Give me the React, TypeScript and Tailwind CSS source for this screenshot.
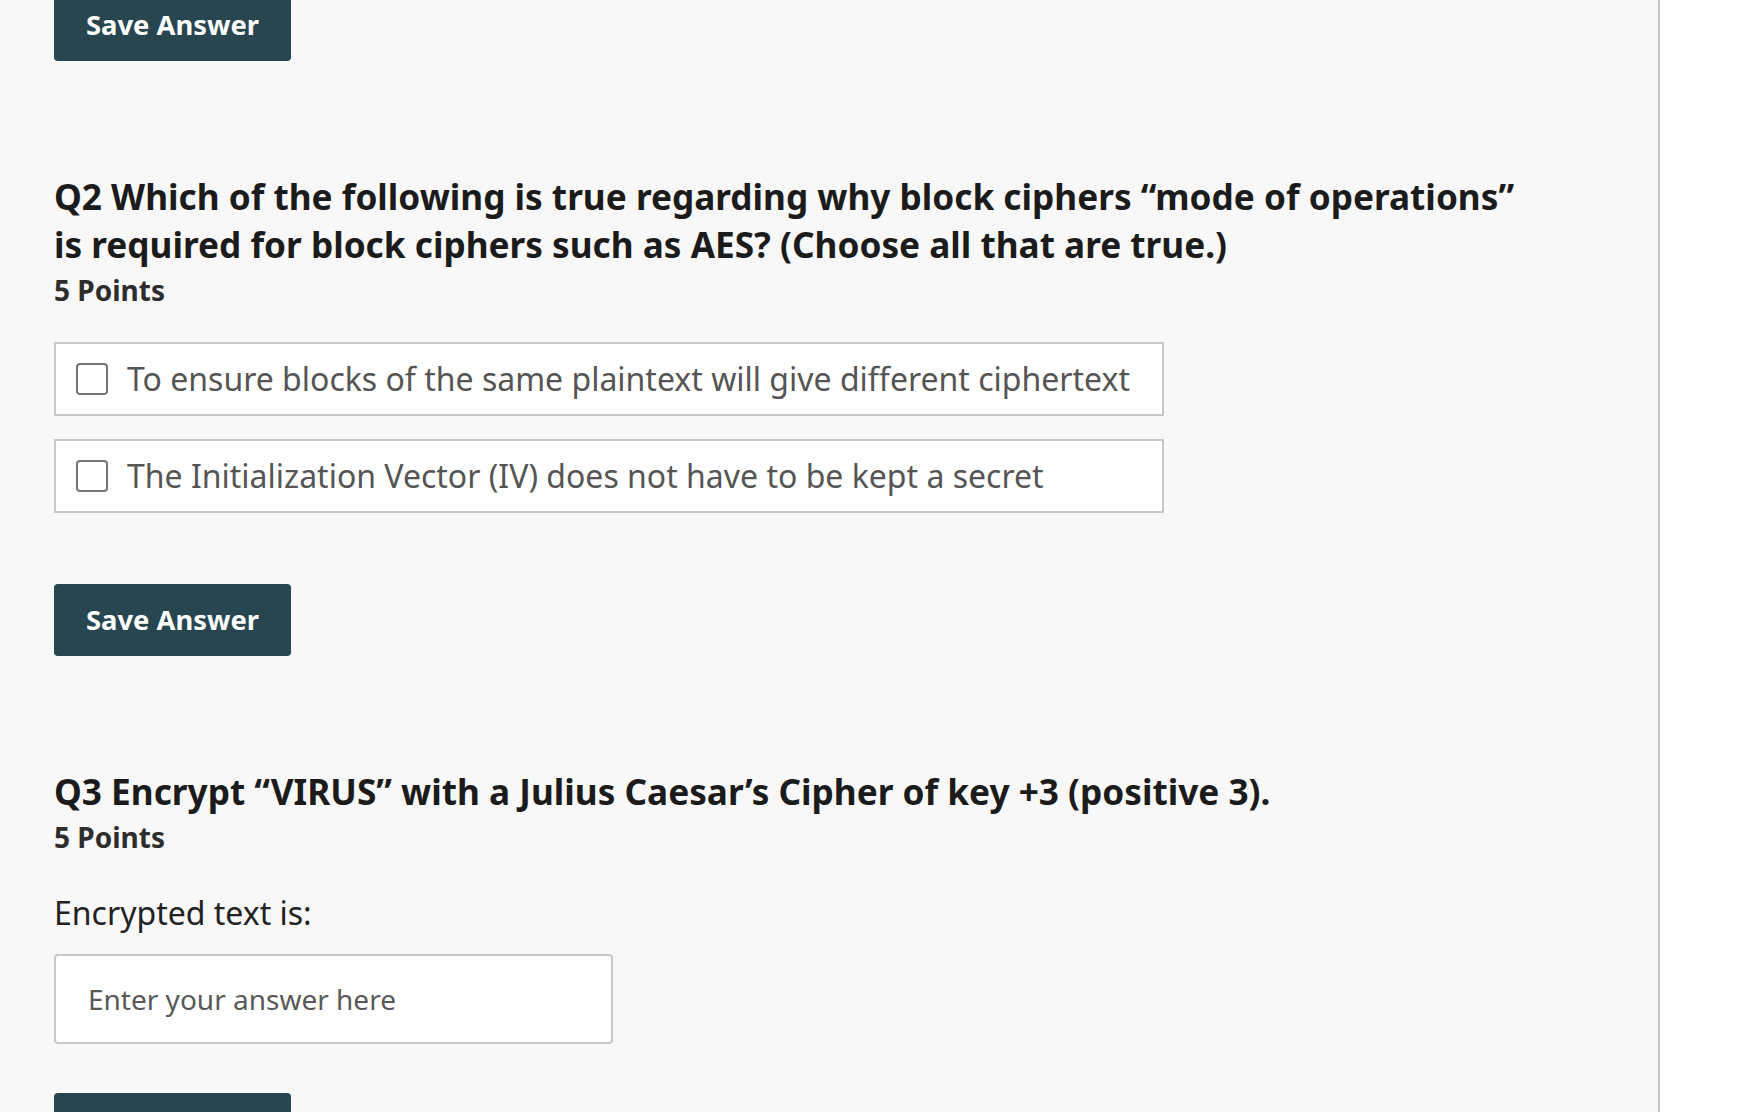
import { useState } from 'react';

type Option = { id: string; label: string };

const q2Options: Option[] = [
  { id: 'a', label: 'To ensure blocks of the same plaintext will give different ciphertext' },
  { id: 'b', label: 'The Initialization Vector (IV) does not have to be kept a secret' },
];

function SaveButton({ className = '' }: { className?: string }) {
  return (
    <button
      className={`block h-[72px] w-[237px] rounded-[4px] bg-[#284650] text-[27.4px] font-bold leading-[40px] text-white ${className}`}
    >
      Save Answer
    </button>
  );
}

function QuestionTitle({ children }: { children: React.ReactNode }) {
  return (
    <div>
      <h2 className="max-w-[1490px] text-[35.2px] font-bold leading-[48px] text-[#1b1b1b]">{children}</h2>
      <p className="mt-[2px] text-[28px] font-bold leading-[40px] text-[#2d2d2d]">5 Points</p>
    </div>
  );
}

export default function App() {
  const [checked, setChecked] = useState<Record<string, boolean>>({});
  const [answer, setAnswer] = useState('');

  return (
    <div
      className="flex h-[1112px] overflow-hidden bg-white"
      style={{ fontFamily: '"Noto Sans", "Open Sans", sans-serif' }}
    >
      <main className="flex-1 border-r-2 border-[#c8c8c8] bg-[#f8f8f8] pl-[54px]">
        <SaveButton className="-mt-[11px]" />

        <section className="mt-[111px]">
          <QuestionTitle>
            Q2 Which of the following is true regarding why block ciphers “mode of operations” is required for
            block ciphers such as AES? (Choose all that are true.)
          </QuestionTitle>

          <div className="mt-[32px] flex w-[1110px] flex-col gap-[23px]">
            {q2Options.map((opt) => (
              <label
                key={opt.id}
                className="flex cursor-pointer items-center gap-[19px] border-2 border-[#c8c8c8] bg-white px-5 py-[11px]"
              >
                <span
                  className={`h-8 w-8 shrink-0 rounded-[4px] border-2 border-[#767676] ${
                    checked[opt.id] ? 'bg-[#284650]' : 'bg-white'
                  }`}
                  onClick={() => setChecked({ ...checked, [opt.id]: !checked[opt.id] })}
                />
                <span className="text-[32px] leading-[48px] text-[#555555]">{opt.label}</span>
              </label>
            ))}
          </div>

          <SaveButton className="mt-[71px]" />
        </section>

        <section className="mt-[111px]">
          <QuestionTitle>Q3 Encrypt “VIRUS” with a Julius Caesar’s Cipher of key +3 (positive 3).</QuestionTitle>

          <p className="mt-[32px] text-[32px] leading-[48px] text-[#222222]">Encrypted text is:</p>
          <input
            type="text"
            value={answer}
            onChange={(e) => setAnswer(e.target.value)}
            placeholder="Enter your answer here"
            className="mt-[17px] block h-[90px] w-[559px] rounded-[4px] border-2 border-[#c8c8c8] bg-white px-8 text-[28px] text-[#333] outline-none placeholder:text-[#595959]"
          />

          <SaveButton className="mt-[49px]" />
        </section>
      </main>
      <aside className="w-[92px] bg-white" />
    </div>
  );
}
